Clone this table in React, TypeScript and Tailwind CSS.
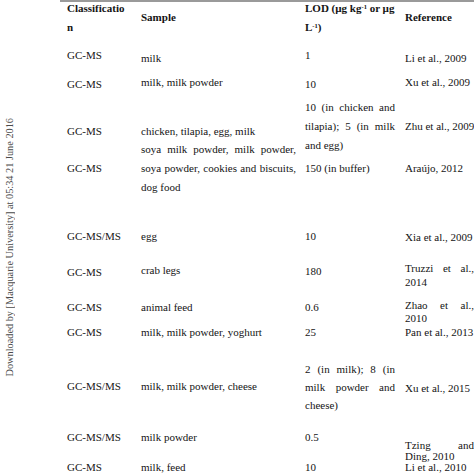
import React from 'react';

// one line of cell text; justified lines spread to the cell width
const L = ({ j, children }: { j?: boolean; children: React.ReactNode }) => (
  <div className={j ? 'text-justify [text-align-last:justify]' : 'whitespace-nowrap'}>{children}</div>
);

const C = ({ className = '', children }: { className?: string; children: React.ReactNode }) => (
  <div className={className}>{children}</div>
);

const rowCls = 'grid grid-cols-[74px_164px_100px_76px] pl-[7px] items-start';

const App = () => {
  return (
    <div className="w-[474px] h-[476px] overflow-hidden bg-white flex [font-family:'Liberation_Serif','Times_New_Roman',serif] text-[#141414]">
      {/* side note */}
      <div className="w-[60px] shrink-0 pl-[4px] pt-[118px]">
        <div className="[writing-mode:vertical-rl] rotate-180 text-[10.3px] leading-[12px] text-[#4a4a4a] whitespace-nowrap">
          Downloaded by [Macquarie University] at 05:34 21 June 2016
        </div>
      </div>

      {/* table */}
      <div className="flex-1 border-t-2 border-[#9a9a9a] text-[11px] leading-[19px]">
        {/* header */}
        <div className={`${rowCls} h-[38px] font-bold`}>
          <C className="mt-[-3px]">
            <L>Classificatio</L>
            <L>n</L>
          </C>
          <C className="pt-[6px]">Sample</C>
          <C className="mt-[-3px]">
            <L>
              LOD (µg kg<sup className="text-[6.5px]">-1</sup> or µg
            </L>
            <L>
              L<sup className="text-[6.5px]">-1</sup>)
            </L>
          </C>
          <C className="pt-[6px]">Reference</C>
        </div>

        {/* row 1 */}
        <div className={`${rowCls} h-[30px]`}>
          <C className="pt-[6px]">GC-MS</C>
          <C className="pt-[9px]">milk</C>
          <C className="pt-[6px]">1</C>
          <C className="pt-[9px]"><L>Li et al., 2009</L></C>
        </div>

        {/* row 2 */}
        <div className={`${rowCls} h-[28px]`}>
          <C className="pt-[5px]">GC-MS</C>
          <C className="pt-[3px]">milk, milk powder</C>
          <C className="pt-[5px]">10</C>
          <C className="pt-[3px]"><L>Xu et al., 2009</L></C>
        </div>

        {/* row 3 */}
        <div className={`${rowCls} h-[42px]`}>
          <C className="pt-[24px]">GC-MS</C>
          <C className="pt-[24px]">chicken, tilapia, egg, milk</C>
          <C className="w-[90px]">
            <L j>10 (in chicken and</L>
            <L j>tilapia); 5 (in milk</L>
            <L>and egg)</L>
          </C>
          <C className="pt-[19px]"><L>Zhu et al., 2009</L></C>
        </div>

        {/* row 4 */}
        <div className={`${rowCls} h-[70px]`}>
          <C className="pt-[19px]">GC-MS</C>
          <C className="w-[155px]">
            <L j>soya milk powder, milk powder,</L>
            <L j>soya powder, cookies and biscuits,</L>
            <L>dog food</L>
          </C>
          <C className="pt-[19px]">150 (in buffer)</C>
          <C className="pt-[19px]"><L>Araújo, 2012</L></C>
        </div>

        {/* row 5 */}
        <div className={`${rowCls} h-[45px]`}>
          <C className="pt-[17px]">GC-MS/MS</C>
          <C className="pt-[17px]">egg</C>
          <C className="pt-[17px]">10</C>
          <C className="pt-[18px]"><L>Xia et al., 2009</L></C>
        </div>

        {/* row 6 */}
        <div className={`${rowCls} h-[35px]`}>
          <C className="pt-[8px]">GC-MS</C>
          <C className="pt-[6px]">crab legs</C>
          <C className="pt-[7px]">180</C>
          <C className="pt-[6px] w-[69px] leading-[14px]">
            <L j>Truzzi et al.,</L>
            <L>2014</L>
          </C>
        </div>

        {/* row 7 */}
        <div className={`${rowCls} h-[30px]`}>
          <C className="pt-[8px]">GC-MS</C>
          <C className="pt-[8px]">animal feed</C>
          <C className="pt-[8px]">0.6</C>
          <C className="pt-[9px] w-[69px] leading-[13px]">
            <L j>Zhao et al.,</L>
            <L>2010</L>
          </C>
        </div>

        {/* row 8 */}
        <div className={`${rowCls} h-[30px]`}>
          <C className="pt-[3px]">GC-MS</C>
          <C className="pt-[3px]">milk, milk powder, yoghurt</C>
          <C className="pt-[3px]">25</C>
          <C className="pt-[3px]"><L>Pan et al., 2013</L></C>
        </div>

        {/* row 9 */}
        <div className={`${rowCls} h-[70px]`}>
          <C className="pt-[27px]">GC-MS/MS</C>
          <C className="pt-[27px]">milk, milk powder, cheese</C>
          <C className="pt-[10px] w-[90px] leading-[18px]">
            <L j>2 (in milk); 8 (in</L>
            <L j>milk powder and</L>
            <L>cheese)</L>
          </C>
          <C className="pt-[29px]"><L>Xu et al., 2015</L></C>
        </div>

        {/* row 10 */}
        <div className={`${rowCls} h-[35px]`}>
          <C className="pt-[8px]">GC-MS/MS</C>
          <C className="pt-[8px]">milk powder</C>
          <C className="pt-[8px]">0.5</C>
          <C className="pt-[20px] w-[69px] leading-[11px]">
            <L j>Tzing and</L>
            <L>Ding, 2010</L>
          </C>
        </div>

        {/* row 11 */}
        <div className={`${rowCls} h-[21px]`}>
          <C className="pt-[3px]">GC-MS</C>
          <C className="pt-[3px]">milk, feed</C>
          <C className="pt-[3px]">10</C>
          <C className="pt-[3px]"><L>Li et al., 2010</L></C>
        </div>
      </div>
    </div>
  );
};

export default App;
